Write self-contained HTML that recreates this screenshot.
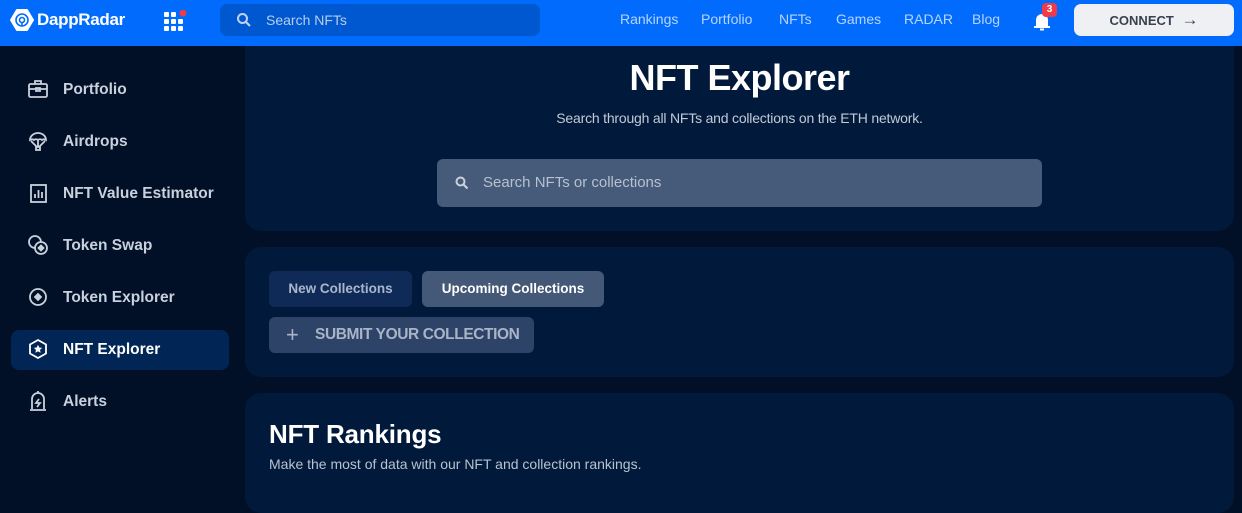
<!DOCTYPE html>
<html><head><meta charset="utf-8"><style>
*{box-sizing:border-box;margin:0;padding:0}
body{width:1242px;height:479px;overflow:hidden;background:#010f27;font-family:"Liberation Sans",Arial,sans-serif;position:relative}
.hdr{position:absolute;left:0;top:0;width:1242px;height:46px;background:#006bfd;z-index:5}
.abs{position:absolute}
.top{z-index:6}
.nav{color:#b8d4ff;font-size:14px;top:11px}
.side{position:absolute;left:63px;color:#c9d1dd;font-weight:bold;font-size:15.5px}
.ic{position:absolute;left:26px;width:24px;height:24px}
.card{position:absolute;left:245px;width:989px;background:#011a3b;border-radius:16px}
</style></head><body>
<div class="hdr"></div>
<svg class="abs top" style="left:10px;top:8px" width="24" height="24" viewBox="0 0 24 24"><path d="M7 2h10l6 10-6 10H7L1 12z" fill="#fff" stroke="#fff" stroke-linejoin="round" stroke-width="2"/><circle cx="12" cy="12" r="6" fill="none" stroke="#006bfd" stroke-width="1.6"/><circle cx="12" cy="12" r="2.5" fill="none" stroke="#006bfd" stroke-width="1.6"/><path d="M12 14.5v4" stroke="#006bfd" stroke-width="1.6"/></svg>
<div class="abs top" style="left:37px;top:10px;color:#fff;font-weight:bold;font-size:17px;letter-spacing:-0.3px">DappRadar</div>
<svg class="abs top" style="left:164px;top:10px" width="24" height="22"><g fill="#fff"><rect x="0" y="2" width="5" height="5" rx="1"/><rect x="7" y="2" width="5" height="5" rx="1"/><rect x="0" y="9" width="5" height="5" rx="1"/><rect x="7" y="9" width="5" height="5" rx="1"/><rect x="14" y="9" width="5" height="5" rx="1"/><rect x="0" y="16" width="5" height="5" rx="1"/><rect x="7" y="16" width="5" height="5" rx="1"/><rect x="14" y="16" width="5" height="5" rx="1"/></g><circle cx="19" cy="3" r="3.5" fill="#f03a47"/></svg>
<div class="abs top" style="left:220px;top:4px;width:320px;height:32px;background:#0058d0;border-radius:7px"></div>
<svg class="abs top" style="left:236px;top:12px" width="16" height="16"><circle cx="6.5" cy="6.5" r="4.5" fill="none" stroke="#c0d3f0" stroke-width="2"/><path d="M10 10l4 4" stroke="#c0d3f0" stroke-width="2"/></svg>
<div class="abs top" style="left:266px;top:12px;color:#b8ccec;font-size:14px">Search NFTs</div>
<div class="abs nav top" style="left:620px">Rankings</div>
<div class="abs nav top" style="left:701px">Portfolio</div>
<div class="abs nav top" style="left:779px">NFTs</div>
<div class="abs nav top" style="left:836px">Games</div>
<div class="abs nav top" style="left:904px">RADAR</div>
<div class="abs nav top" style="left:972px">Blog</div>
<svg class="abs top" style="left:1030px;top:8px" width="24" height="24"><path d="M6 19V12a6 6 0 0112 0v7z" fill="#fff"/><rect x="4" y="18" width="16" height="2" fill="#fff"/><path d="M10 21.5h4" stroke="#fff" stroke-width="2"/></svg>
<div class="abs top" style="left:1042px;top:3px;width:15px;height:14px;background:#f03a47;border-radius:4px;color:#fff;font-size:10px;font-weight:bold;text-align:center;line-height:14px">3</div>
<div class="abs top" style="left:1074px;top:4px;width:160px;height:32px;background:#eef0f4;border-radius:7px;color:#39414e;font-weight:bold;font-size:13px;line-height:32px;text-align:center">CONNECT <span style="font-weight:normal;font-size:17px;margin-left:4px">→</span></div>

<div class="abs" style="left:11px;top:330px;width:218px;height:40px;background:#012554;border-radius:8px"></div>
<svg class="ic" style="top:77px" viewBox="0 0 24 24" fill="none" stroke="#c9d1dd" stroke-width="1.8"><rect x="3" y="7" width="18" height="13" rx="1.5"/><path d="M3 12h18M9 7V4h6v3M10 11h4v3h-4z"/></svg>
<div class="side" style="top:81px">Portfolio</div>
<svg class="ic" style="top:129px" viewBox="0 0 24 24" fill="none" stroke="#c9d1dd" stroke-width="1.8"><path d="M4 11a8 7 0 0116 0c-2-1-3-1-4 0-1-1-3-1-4 0-1-1-3-1-4 0-1-1-2-1-4 0zM5 12l6 6M19 12l-6 6M12 11v7M10 18h4v3h-4z"/></svg>
<div class="side" style="top:133px">Airdrops</div>
<svg class="ic" style="top:181px" viewBox="0 0 24 24" fill="none" stroke="#c9d1dd" stroke-width="1.8"><rect x="5" y="4" width="15" height="17"/><path d="M9 17v-4M12.5 17V9M16 17v-6"/></svg>
<div class="side" style="top:185px">NFT Value Estimator</div>
<svg class="ic" style="top:233px" viewBox="0 0 24 24" fill="none" stroke="#c9d1dd" stroke-width="1.8"><circle cx="9" cy="9" r="6"/><circle cx="15" cy="15" r="6" fill="#010f27"/><path d="M15 12.5l2.5 2.5-2.5 2.5-2.5-2.5z" fill="#c9d1dd"/></svg>
<div class="side" style="top:237px">Token Swap</div>
<svg class="ic" style="top:285px" viewBox="0 0 24 24" fill="none" stroke="#c9d1dd" stroke-width="1.8"><circle cx="12" cy="12" r="8"/><path d="M12 9l3 3-3 3-3-3z" fill="#c9d1dd"/></svg>
<div class="side" style="top:289px">Token Explorer</div>
<svg class="ic" style="top:337px" viewBox="0 0 24 24" fill="none" stroke="#fff" stroke-width="1.8"><path d="M12 3l8 4.5v9L12 21l-8-4.5v-9z"/><path d="M12 8.5l1.1 2.3 2.4.3-1.8 1.7.5 2.4-2.2-1.2-2.2 1.2.5-2.4-1.8-1.7 2.4-.3z" fill="#fff" stroke-width="0.6"/></svg>
<div class="side" style="top:341px;color:#fff">NFT Explorer</div>
<svg class="ic" style="top:389px" viewBox="0 0 24 24" fill="none" stroke="#c9d1dd" stroke-width="1.8"><path d="M6 20V10a6 6 0 0112 0v10M4 21h16M12 2v2M13 10l-3 4h4l-3 4"/></svg>
<div class="side" style="top:393px">Alerts</div>

<div class="card" style="top:30px;height:201px"></div>
<div class="abs" style="left:245px;top:57px;width:989px;text-align:center;color:#fff;font-weight:bold;font-size:36px;letter-spacing:-0.5px">NFT Explorer</div>
<div class="abs" style="left:245px;top:110px;width:989px;text-align:center;color:#c2cad6;font-size:14px;letter-spacing:-0.2px">Search through all NFTs and collections on the ETH network.</div>
<div class="abs" style="left:437px;top:159px;width:605px;height:48px;background:#465a7a;border-radius:6px"></div>
<svg class="abs" style="left:455px;top:176px" width="14" height="14"><circle cx="5.5" cy="5.5" r="4" fill="none" stroke="#c9d1dd" stroke-width="2"/><path d="M8.5 8.5l4 4" stroke="#c9d1dd" stroke-width="2.2"/></svg>
<div class="abs" style="left:483px;top:174px;color:#b7c1d0;font-size:15px">Search NFTs or collections</div>

<div class="card" style="top:247px;height:130px"></div>
<div class="abs" style="left:269px;top:271px;width:143px;height:36px;background:#0f2a56;border-radius:6px;color:#a9b7cc;font-weight:bold;font-size:13.5px;line-height:36px;text-align:center">New Collections</div>
<div class="abs" style="left:422px;top:271px;width:182px;height:36px;background:#445877;border-radius:6px;color:#fff;font-weight:bold;font-size:13.5px;line-height:36px;text-align:center">Upcoming Collections</div>
<div class="abs" style="left:269px;top:317px;width:265px;height:36px;background:#2d4468;border-radius:6px;color:#a9b4c6;font-weight:bold;font-size:15.5px;letter-spacing:-0.4px;line-height:36px;padding-left:46px">SUBMIT YOUR COLLECTION</div>
<div class="abs" style="left:286px;top:322px;color:#a9b4c6;font-size:22px">+</div>

<div class="card" style="top:393px;height:120px"></div>
<div class="abs" style="left:269px;top:419px;color:#fff;font-weight:bold;font-size:26px;letter-spacing:-0.2px">NFT Rankings</div>
<div class="abs" style="left:269px;top:456px;color:#b8c2d0;font-size:14px">Make the most of data with our NFT and collection rankings.</div>
</body></html>
